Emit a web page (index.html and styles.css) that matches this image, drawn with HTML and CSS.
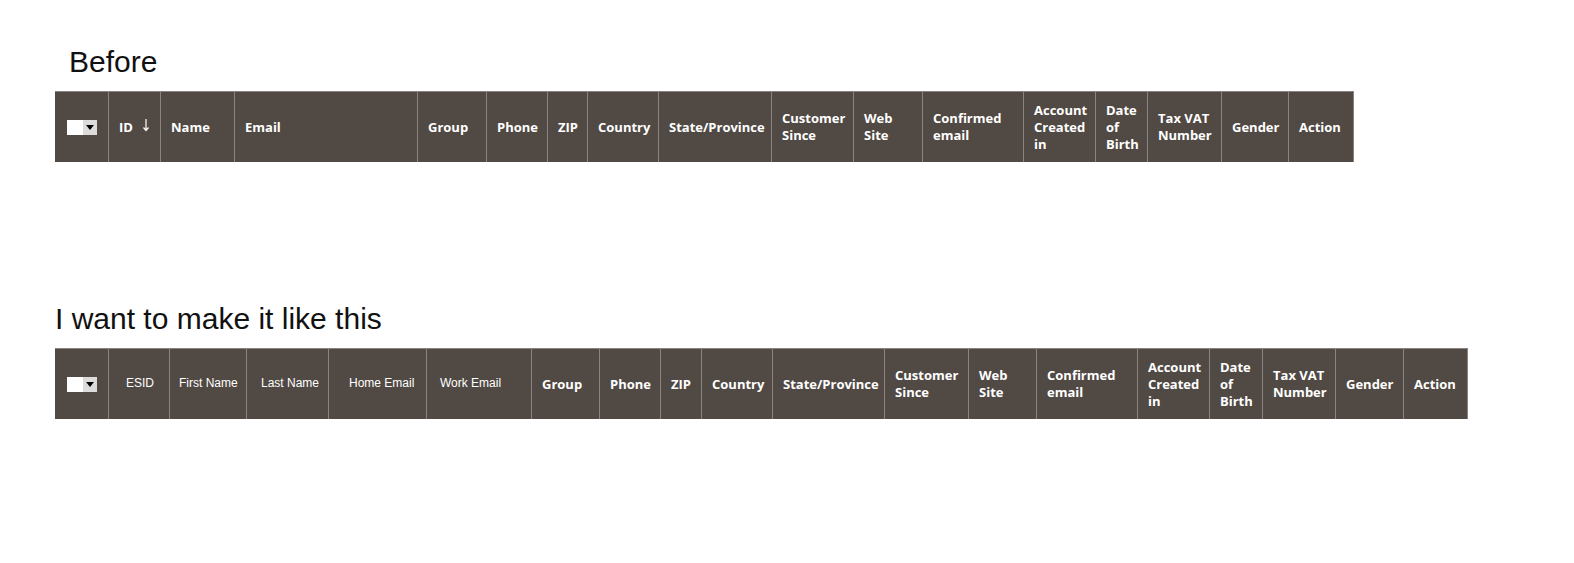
FILE: index.html
```html
<!DOCTYPE html>
<html lang="en">
<head>
    <meta charset="UTF-8">
    <meta name="viewport" content="width=device-width, initial-scale=1.0">
    <title>Customer grid columns</title>
    <link rel="stylesheet" href="styles.css">
</head>
<body>
    <div class="page">
        <h2 class="caption caption-before">Before</h2>
        <div class="grid-head">
            <div class="cell col-select"><span class="mass-select"><span class="box"></span><span class="drop"></span></span></div>
            <div class="cell col-id">ID<svg class="sort-arrow" width="8" height="14" viewBox="0 0 8 14"><path d="M4 1 V12 M1.5 9.5 L4 12.5 L6.5 9.5" fill="none" stroke="#fff" stroke-width="1.2"/></svg></div>
            <div class="cell w74">Name</div>
            <div class="cell w183">Email</div>
            <div class="cell w69">Group</div>
            <div class="cell w61">Phone</div>
            <div class="cell w40">ZIP</div>
            <div class="cell w71">Country</div>
            <div class="cell w113">State/Province</div>
            <div class="cell w82">Customer Since</div>
            <div class="cell w69">Web Site</div>
            <div class="cell w101">Confirmed email</div>
            <div class="cell w72">Account Created in</div>
            <div class="cell w52">Date of Birth</div>
            <div class="cell w74">Tax VAT Number</div>
            <div class="cell w67">Gender</div>
            <div class="cell w65">Action</div>
        </div>

        <h2 class="caption caption-after">I want to make it like this</h2>
        <div class="grid-head">
            <div class="cell col-select"><span class="mass-select"><span class="box"></span><span class="drop"></span></span></div>
            <div class="cell plain esid">ESID</div>
            <div class="cell plain first-name">First Name</div>
            <div class="cell plain last-name">Last Name</div>
            <div class="cell plain home-email">Home Email</div>
            <div class="cell plain work-email">Work Email</div>
            <div class="cell w68">Group</div>
            <div class="cell w61">Phone</div>
            <div class="cell w41">ZIP</div>
            <div class="cell w71">Country</div>
            <div class="cell w112">State/Province</div>
            <div class="cell w84">Customer Since</div>
            <div class="cell w68">Web Site</div>
            <div class="cell w101">Confirmed email</div>
            <div class="cell w72">Account Created in</div>
            <div class="cell w53">Date of Birth</div>
            <div class="cell w73">Tax VAT Number</div>
            <div class="cell w68">Gender</div>
            <div class="cell w64">Action</div>
        </div>
    </div>
</body>
</html>
```

FILE: styles.css
```css
body{
    margin: 0;
    background: #fff;
    font-family: "Liberation Sans", Arial, sans-serif;
}
.page{
    padding: 45px 0 0 55px;
}
.caption{
    margin: 0 0 12px;
    font-size: 30px;
    font-weight: normal;
    line-height: 34px;
    color: #111;
}
.caption-before{
    padding-left: 14px;
}
.caption-after{
    margin-top: 140px;
}
.grid-head{
    display: flex;
    width: max-content;
    background: #514943;
}
.grid-head .cell{
    display: flex;
    align-items: center;
    flex: none;
    height: 71px;
    box-sizing: border-box;
    padding: 0 6px 0 10px;
    border-right: 1px solid #8a837f;
    border-top: 1px solid #8a837f;
    color: #fff;
    font-family: "Open Sans", sans-serif;
    font-size: 13px;
    font-weight: 700;
    line-height: 17px;
}

/* mass action checkbox */
.grid-head .col-select{
    width: 54px;
    padding-left: 12px;
}
.mass-select{
    display: flex;
    width: 30px;
    height: 15px;
}
.mass-select .box{
    width: 16px;
    background: #fff;
}
.mass-select .drop{
    position: relative;
    width: 14px;
    background: #dcdcdc;
}
.mass-select .drop::after{
    content: "";
    position: absolute;
    left: 3px;
    top: 5px;
    border-left: 4px solid transparent;
    border-right: 4px solid transparent;
    border-top: 5px solid #000;
}

.grid-head .col-id{
    width: 52px;
    white-space: nowrap;
}
.sort-arrow{
    margin: -4px 0 0 9px;
}

/* plain added columns */
.grid-head .plain{
    padding-bottom: 1px;
    padding-right: 4px;
    font-family: "Liberation Sans", Arial, sans-serif;
    font-size: 12px;
    font-weight: normal;
}
.grid-head .esid{ width: 61px; padding-left: 17px; }
.grid-head .first-name{ width: 77px; padding-left: 9px; }
.grid-head .last-name{ width: 82px; padding-left: 14px; }
.grid-head .home-email{ width: 98px; padding-left: 20px; }
.grid-head .work-email{ width: 105px; padding-left: 13px; }

.w40{ width: 40px; }
.w41{ width: 41px; }
.w52{ width: 52px; }
.w53{ width: 53px; }
.w61{ width: 61px; }
.w64{ width: 64px; }
.w65{ width: 65px; }
.w67{ width: 67px; }
.w68{ width: 68px; }
.w69{ width: 69px; }
.w71{ width: 71px; }
.w72{ width: 72px; }
.w73{ width: 73px; }
.w74{ width: 74px; }
.w82{ width: 82px; }
.w84{ width: 84px; }
.w101{ width: 101px; }
.w112{ width: 112px; }
.w113{ width: 113px; }
.w183{ width: 183px; }
```
